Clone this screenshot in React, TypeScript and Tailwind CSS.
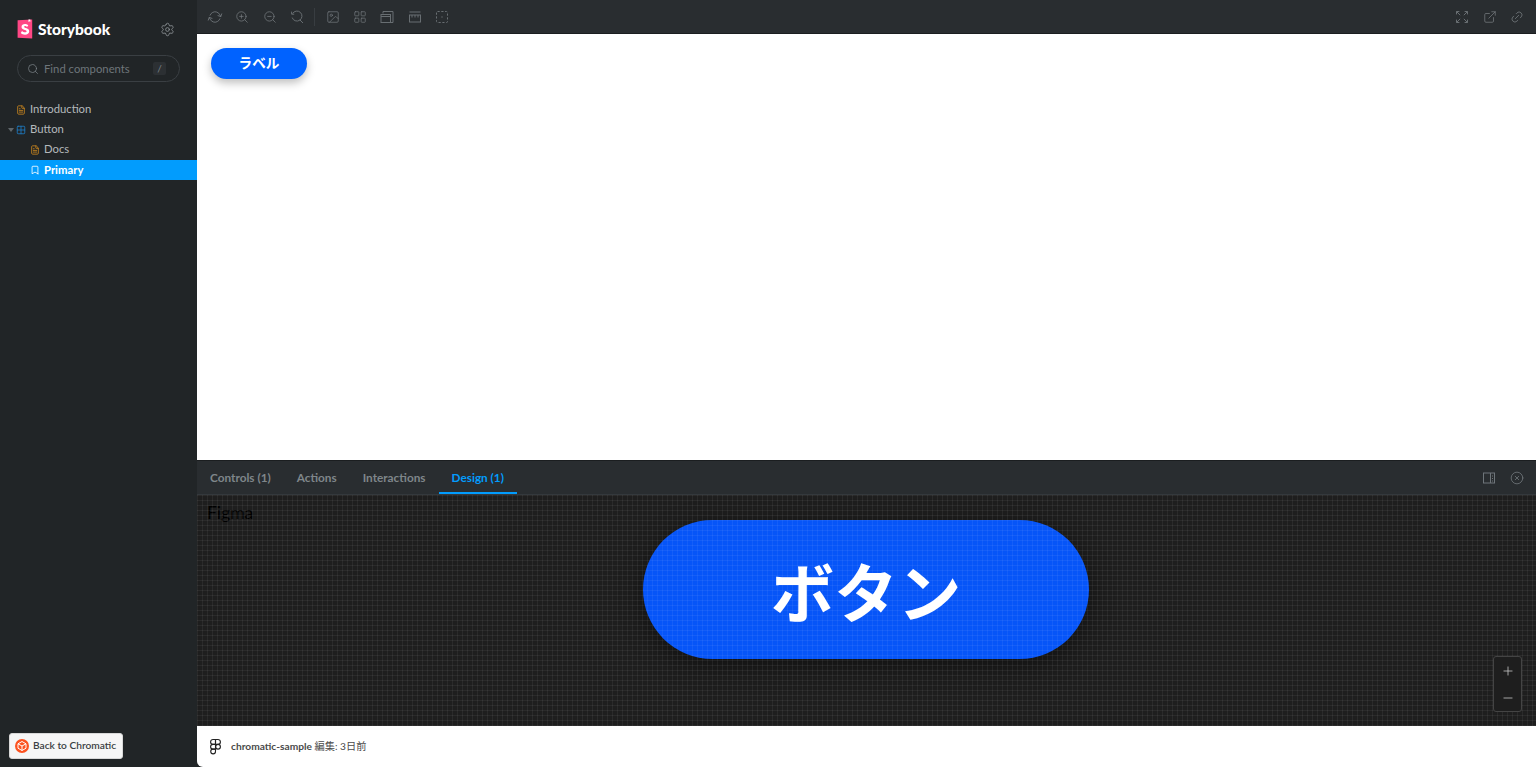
import React from "react";
import { Search, Settings, RefreshCw, ZoomIn, ZoomOut, Image, LayoutGrid, ExternalLink, Link2, CircleX, Plus, Minus, Bookmark, FileText, Grid2x2 } from "lucide-react";

const sans = "font-['Lato','Noto_Sans_CJK_JP',sans-serif]";

function ToolIcon({ children }: { children: React.ReactNode }) {
  return <div className="w-[14px] h-[14px] flex items-center justify-center text-[#747a7e]">{children}</div>;
}

function Svg({ children }: { children: React.ReactNode }) {
  return (
    <svg width="14" height="14" viewBox="0 0 14 14" fill="none" stroke="currentColor" strokeWidth="1" opacity="0.85">
      {children}
    </svg>
  );
}

function Tree({ indent, icon, label, active, caret }: { indent: string; icon: React.ReactNode; label: string; active?: boolean; caret?: boolean }) {
  return (
    <div className={`relative h-5 flex items-center gap-[4px] text-[11.3px] ${indent} ${active ? "bg-[#029cfd] text-white font-bold" : "text-[#b4b9bc]"}`}>
      {caret && <span className="absolute left-2 top-[8px] w-0 h-0 border-x-[3px] border-x-transparent border-t-[4px] border-t-[#5f666b]" />}
      {icon}
      <span className={active ? "" : "pb-[2px]"}>{label}</span>
    </div>
  );
}

export default function App() {
  return (
    <div className={`w-[1536px] h-[767px] flex overflow-hidden bg-[#212527] ${sans}`}>
      <aside className="w-[197px] shrink-0 flex flex-col bg-[#212527] pt-[19px]">
        <div className="flex items-center pl-[17px] pr-[22px] h-5">
          <svg width="16" height="20" viewBox="0 0 16 20" className="shrink-0">
            <path d="M0.6 1.2 L15.2 0.4 V19.4 L0.6 18.8 Z" fill="#ff4785" />
            <path d="M11.5 0.6 L11.4 3 L12.4 2.3 L13.3 3 L13.4 0.5 Z" fill="#fff" />
            <path d="M11.3 6.6 C10.6 5.6 9.5 5.1 8 5.1 C6 5.1 4.5 6.1 4.5 7.9 C4.5 11.2 9.6 10.4 9.6 12.3 C9.6 13 9 13.3 8 13.3 C6.8 13.3 5.8 12.8 5 11.9 L3.8 14.1 C4.8 15.2 6.3 15.7 8 15.7 C10.4 15.7 12.2 14.5 12.2 12.2 C12.2 8.7 7.1 9.5 7.1 7.8 C7.1 7.3 7.5 7.1 8.2 7.1 C9 7.1 9.6 7.5 10 8.1 Z" fill="#fff" />
          </svg>
          <span className="ml-[5px] text-[15.5px] font-black text-white leading-none pt-px">Storybook</span>
          <Settings size={15} className="ml-auto text-[#8a9094]" strokeWidth={1.4} />
        </div>
        <div className="mx-[17px] mt-[16px] h-[27px] rounded-full border border-[#3a3f43] flex items-center pl-[9px] pr-[13px] text-[#7b8287]">
          <Search size={12} strokeWidth={1.5} />
          <span className="ml-[5px] text-[11.3px] leading-[25px] pb-px text-[#6e757a]">Find components</span>
          <span className="ml-auto w-[13px] h-[13px] rounded-[2px] bg-[#2c3033] text-[10px] leading-[13px] text-center text-[#7b8287]">/</span>
        </div>
        <nav className="mt-[18px] flex flex-col">
          <Tree indent="pl-4" label="Introduction" icon={<FileText size={10} className="text-[#c9861f]" />} />
          <Tree indent="pl-4" label="Button" caret icon={<Grid2x2 size={10} className="text-[#1d7cc4]" />} />
          <Tree indent="pl-[30px]" label="Docs" icon={<FileText size={10} className="text-[#c9861f]" />} />
          <Tree indent="pl-[30px]" label="Primary" active icon={<Bookmark size={10} className="text-white" />} />
        </nav>
        <div className="mt-auto mb-[8px] ml-[9px] w-[114px] h-[26px] rounded-[3px] bg-[#f6f6f6] border border-[#d8d8d8] flex items-center pl-[5px] gap-[4px]">
          <svg width="14" height="14" viewBox="0 0 14 14" className="shrink-0">
            <circle cx="7" cy="7" r="7" fill="#fc521f" />
            <path d="M7 2.5 L11 4.8 V9.2 L7 11.5 L3 9.2 V4.8 Z M3 4.8 L7 7 L11 4.8 M7 7 V11.5" fill="none" stroke="#fff" strokeWidth="1" />
          </svg>
          <span className="text-[10.2px] font-semibold text-[#3a3f43] whitespace-nowrap">Back to Chromatic</span>
        </div>
      </aside>

      <main className="flex-1 min-w-0 flex flex-col rounded-bl-[6px] overflow-hidden">
        <header className="h-[34px] shrink-0 bg-[#292d30] flex items-center pl-[11px] pr-[12px] border-b border-[#1b1e20]">
          <div className="flex items-center gap-[13.3px]">
            <ToolIcon><RefreshCw size={14} strokeWidth={1.3} className="rotate-[20deg]" /></ToolIcon>
            <ToolIcon><ZoomIn size={14} strokeWidth={1.3} /></ToolIcon>
            <ToolIcon><ZoomOut size={14} strokeWidth={1.3} /></ToolIcon>
            <ToolIcon>
              <Svg>
                <path d="M2.6 3.6 A5 5 0 1 1 2.2 7.6" />
                <path d="M1.6 1.6 V4.2 H4.2" />
                <path d="M9.6 9.6 L13 13" />
              </Svg>
            </ToolIcon>
          </div>
          <div className="w-px h-[18px] bg-[#383d41] mx-[10.5px]" />
          <div className="flex items-center gap-[13.3px]">
            <ToolIcon><Image size={14} strokeWidth={1.2} /></ToolIcon>
            <ToolIcon><LayoutGrid size={14} strokeWidth={1.2} /></ToolIcon>
            <ToolIcon>
              <Svg>
                <path d="M3 3.5 V1.5 H13 V12.5 H10.5" />
                <rect x="1" y="4.5" width="9.5" height="8" />
                <path d="M1 6.5 H10.5" />
              </Svg>
            </ToolIcon>
            <ToolIcon>
              <Svg>
                <path d="M1.5 2 H12.5" />
                <rect x="1.5" y="5" width="11" height="7" />
                <path d="M4 5 V7.5 M7 5 V7.5 M10 5 V7.5" />
              </Svg>
            </ToolIcon>
            <ToolIcon>
              <Svg>
                <rect x="1.5" y="1.5" width="11" height="11" rx="1" strokeDasharray="2.2 1.6" />
                <circle cx="7" cy="7" r="0.7" fill="currentColor" stroke="none" />
              </Svg>
            </ToolIcon>
          </div>
          <div className="ml-auto flex items-center gap-[13.3px]">
            <ToolIcon>
              <Svg>
                <path d="M1.5 1.5 L5.2 5.2 M12.5 1.5 L8.8 5.2 M1.5 12.5 L5.2 8.8 M12.5 12.5 L8.8 8.8" />
                <path d="M1.5 4.4 V1.5 H4.4 M9.6 1.5 H12.5 V4.4 M1.5 9.6 V12.5 H4.4 M9.6 12.5 H12.5 V9.6" />
              </Svg>
            </ToolIcon>
            <ToolIcon><ExternalLink size={14} strokeWidth={1.3} /></ToolIcon>
            <ToolIcon><Link2 size={14} strokeWidth={1.3} className="-rotate-45" /></ToolIcon>
          </div>
        </header>

        <section className="h-[426px] shrink-0 bg-white p-[14px]">
          <div className="w-[96px] h-[31px] rounded-full bg-[#0062ff] text-white text-[13.6px] font-bold flex items-center justify-center shadow-[0_4px_8px_rgba(0,0,0,0.25)]">
            <span className="pb-px">ラベル</span>
          </div>
        </section>

        <div className="h-[35px] shrink-0 bg-[#292d30] flex items-stretch pr-[12px] border-t border-[#1b1e20] border-b border-b-[#34393d]">
          <div className="flex items-center text-[11.8px] font-bold text-[#7f868a]">
            <span className="px-[13px] pt-px">Controls (1)</span>
            <span className="px-[13px] pt-px">Actions</span>
            <span className="px-[13px] pt-px">Interactions</span>
            <span className="px-[13px] pt-[2px] h-full flex items-center text-[#029cfd] border-b-2 border-[#029cfd]">Design (1)</span>
          </div>
          <div className="ml-auto flex items-center gap-[14px] text-[#7b8287]">
            <Svg>
              <rect x="1.5" y="2" width="11" height="10" />
              <path d="M8.5 2 V12 M10.5 4.5 V5.5 M10.5 7 V8 M10.5 9.5 V10.5" />
            </Svg>
            <CircleX size={14} strokeWidth={1.2} />
          </div>
        </div>

        <section className="relative h-[231px] shrink-0 bg-[#1e1e1e] flex justify-center pt-[25px]">
          <span className="absolute left-[10px] top-[8px] text-[17.5px] leading-5 text-black">Figma</span>
          <div className="w-[446px] h-[139px] ml-[-1px] rounded-full bg-[#0655f8] flex items-center justify-center text-white text-[63.5px] font-bold shadow-[0_6px_24px_rgba(0,0,0,0.45)] font-['Noto_Sans_CJK_JP',sans-serif]">
            ボタン
          </div>
          <div className="absolute inset-0 pointer-events-none bg-[linear-gradient(to_right,rgba(255,255,255,0.055)_1px,transparent_1px),linear-gradient(to_bottom,rgba(255,255,255,0.055)_1px,transparent_1px)] bg-[size:5px_5px]" />
          <div className="absolute right-[14px] bottom-[14px] w-[29px] h-[56px] rounded-[3px] bg-[#1e1e1e] border border-[#444] flex flex-col items-center justify-around text-[#d0d0d0]">
            <Plus size={14} strokeWidth={1.3} />
            <Minus size={14} strokeWidth={1.3} />
          </div>
        </section>

        <footer className="flex-1 bg-white flex items-center pl-[13px] gap-[10px] text-[10.2px] text-[#4a4a4a]">
          <svg width="11" height="16" viewBox="0 0 38 57" fill="none" stroke="#222" strokeWidth="4">
            <path d="M19 2 H10 a8.5 8.5 0 0 0 0 17 H19 Z" />
            <path d="M19 2 H28 a8.5 8.5 0 0 1 0 17 H19 Z" />
            <path d="M19 19 H10 a8.5 8.5 0 0 0 0 17 H19 Z" />
            <circle cx="28" cy="27.5" r="8.5" />
            <path d="M19 36 H10 a8.5 8.5 0 1 0 9 8.5 Z" />
          </svg>
          <span><b className="font-bold">chromatic-sample</b> 編集: 3日前</span>
        </footer>
      </main>
    </div>
  );
}
